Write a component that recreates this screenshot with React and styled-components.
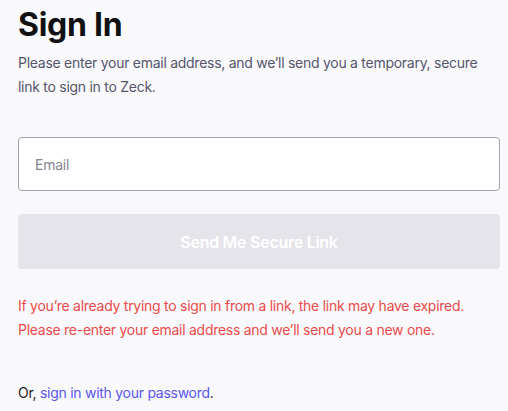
import styled, { createGlobalStyle } from 'styled-components'

const GlobalStyle = createGlobalStyle`
  html, body {
    margin: 0;
    padding: 0;
    background-color: #f9f9fb;
    font-family: Inter, "Noto Sans", sans-serif;
    letter-spacing: -0.017em;
  }
`

const Page = styled.div`
  display: flex;
  flex-direction: column;
  padding: 5px 8px 0 18px;
`

const Title = styled.h1`
  margin: 0;
  font-size: 32px;
  line-height: 40px;
  font-weight: 700;
  color: #111114;
`

const Intro = styled.p`
  margin: 6px 0 0;
  font-size: 14px;
  line-height: 24px;
  color: #55556d;
`

const Form = styled.form`
  display: flex;
  flex-direction: column;
  gap: 23px;
  margin-top: 38px;
`

const EmailInput = styled.input`
  box-sizing: border-box;
  width: 100%;
  height: 54px;
  padding: 0 16px;
  border: 1px solid #a3a3b2;
  border-radius: 4px;
  background: #fff;
  font-family: Inter, sans-serif;
  font-size: 14px;
  letter-spacing: -0.017em;
  color: #222;
  outline: none;
  &::placeholder {
    color: #85858f;
  }
`

const SubmitButton = styled.button`
  height: 55px;
  border: none;
  border-radius: 4px;
  background-color: #e4e4ea;
  color: #fff;
  font-family: Inter, sans-serif;
  font-size: 16px;
  font-weight: 600;
  letter-spacing: -0.017em;
  cursor: not-allowed;
`

const Warning = styled.p`
  margin: 25px 0 0;
  font-size: 14px;
  line-height: 24px;
  color: #ea4b4b;
`

const Footer = styled.p`
  margin: 39px 0 0;
  font-size: 14px;
  line-height: 24px;
  color: #1c1c22;
`

const TextLink = styled.a`
  color: #5a55f0;
  text-decoration: none;
`

function App() {
  return (
    <>
      <GlobalStyle />
      <Page>
        <Title>Sign In</Title>
        <Intro>
          Please enter your email address, and we’ll send you a temporary, secure
          link to sign in to Zeck.
        </Intro>
        <Form onSubmit={(e) => e.preventDefault()}>
          <EmailInput type="email" placeholder="Email" />
          <SubmitButton type="submit" disabled>
            Send Me Secure Link
          </SubmitButton>
        </Form>
        <Warning>
          If you’re already trying to sign in from a link, the link may have expired.
          <br />
          Please re-enter your email address and we’ll send you a new one.
        </Warning>
        <Footer>
          Or, <TextLink href="#">sign in with your password</TextLink>.
        </Footer>
      </Page>
    </>
  )
}

export default App
